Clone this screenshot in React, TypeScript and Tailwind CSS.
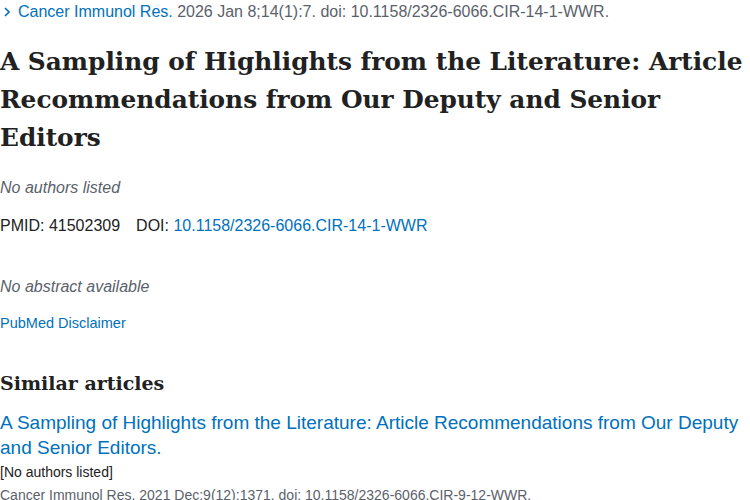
import React from 'react';

const sans = { fontFamily: '"Liberation Sans", Arial, sans-serif' };
const serif = { fontFamily: '"DejaVu Serif", "Liberation Serif", serif' };

export default function App() {
  return (
    <div className="w-[750px] h-[500px] overflow-hidden bg-white text-[#212121]" style={sans}>
      <div className="flex items-center gap-[6px] pt-[2px] text-[16px] leading-[20px]">
        <svg width="10" height="12" viewBox="0 0 10 12" className="ml-[2px]">
          <path d="M3 2l4 4-4 4" fill="none" stroke="#0071bc" strokeWidth="1.6" />
        </svg>
        <span>
          <a className="text-[#0071bc]">Cancer Immunol Res.</a>{' '}
          <span className="text-[#5b616b]">2026 Jan 8;14(1):7. doi: 10.1158/2326-6066.CIR-14-1-WWR.</span>
        </span>
      </div>

      <h1 className="mt-[21px] text-[24.8px] leading-[38px] font-bold text-[#212121]" style={serif}>
        A Sampling of Highlights from the Literature: Article Recommendations from Our Deputy and Senior Editors
      </h1>

      <div className="mt-[21px] text-[16px] leading-[20px] italic text-[#5b616b]">No authors listed</div>

      <div className="mt-[18px] text-[16px] leading-[20px] flex gap-[16px]">
        <span>PMID: 41502309</span>
        <span>
          DOI: <a className="text-[#0071bc]">10.1158/2326-6066.CIR-14-1-WWR</a>
        </span>
      </div>

      <div className="mt-[41px] text-[16px] leading-[20px] italic text-[#5b616b]">No abstract available</div>

      <div className="mt-[17px] text-[14.5px] leading-[18px] text-[#0071bc]">PubMed Disclaimer</div>

      <h2 className="mt-[37px] text-[19px] leading-[28px] font-bold text-[#212121]" style={serif}>
        Similar articles
      </h2>

      <div className="mt-[13px] text-[19px] leading-[25px] text-[#0071bc] pr-[8px]">
        A Sampling of Highlights from the Literature: Article Recommendations from Our Deputy and Senior Editors.
      </div>
      <div className="mt-[3px] text-[14px] leading-[18px] text-[#212121]">[No authors listed]</div>
      <div className="mt-[5px] text-[14px] leading-[18px] text-[#5b616b]">
        Cancer Immunol Res. 2021 Dec;9(12):1371. doi: 10.1158/2326-6066.CIR-9-12-WWR.
      </div>
    </div>
  );
}
